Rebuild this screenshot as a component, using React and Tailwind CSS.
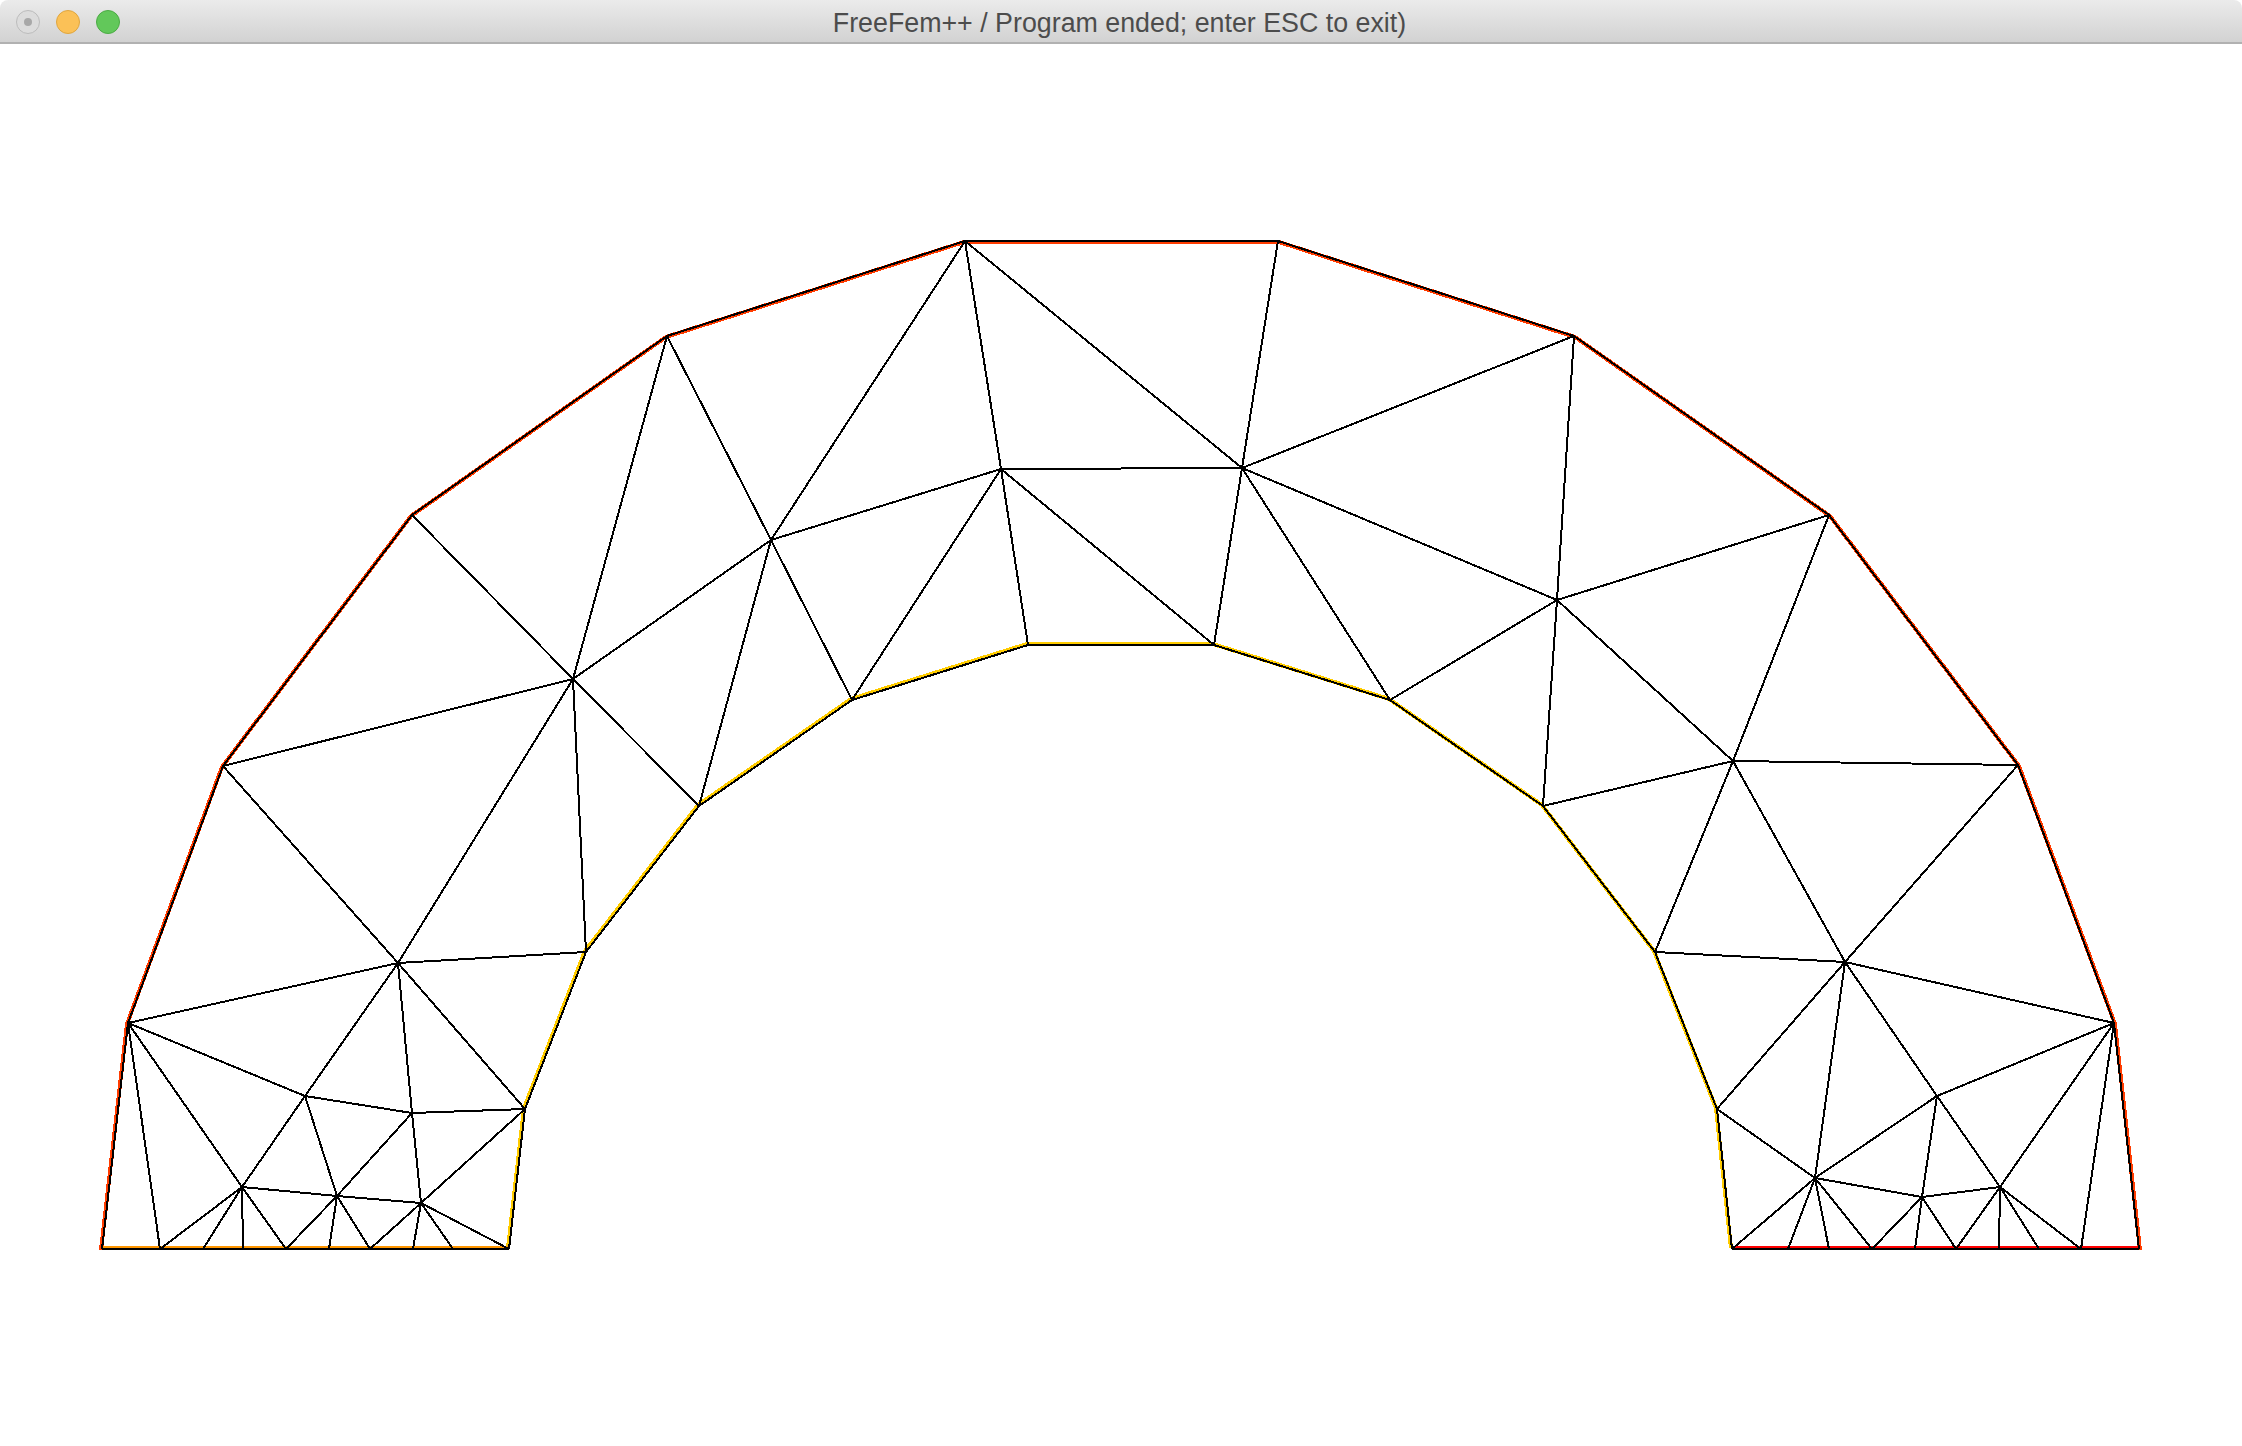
const outerLeft = "102,1249 128,1023 223,766 412,515 667,336 965,241 1278,241";
const outerRight = "1278,241 1574,336 1829,515 2018,765 2114,1023 2139,1249";
const inner = "509,1249 525,1109 586,952 699,806 852,700 1028,645 1214,645 1390,700 1543,806 1655,952 1717,1109 1732,1249";

// triangulation edges, page coordinates: x1 y1 x2 y2
const edges = [
  [965, 241, 1001, 469], [965, 241, 1242, 468], [1278, 241, 1242, 468], [1001, 469, 1242, 468],
  [1001, 469, 1028, 645], [1001, 469, 1214, 645], [1242, 468, 1214, 645], [1242, 468, 1390, 700],
  [1242, 468, 1574, 336], [1242, 468, 1557, 600], [1574, 336, 1557, 600], [1829, 515, 1557, 600],
  [1557, 600, 1390, 700], [1557, 600, 1543, 806], [1557, 600, 1733, 761], [1829, 515, 1733, 761],
  [1733, 761, 2018, 765], [1733, 761, 1543, 806], [1733, 761, 1655, 952], [1733, 761, 1845, 962],
  [2018, 765, 1845, 962], [1845, 962, 2114, 1023], [1845, 962, 1655, 952], [1845, 962, 1717, 1109],
  [1845, 962, 1815, 1178], [1845, 962, 1937, 1096], [1717, 1109, 1815, 1178], [1815, 1178, 1937, 1096],
  [1937, 1096, 2114, 1023], [1937, 1096, 1922, 1197], [1937, 1096, 2000, 1187], [2114, 1023, 2000, 1187],
  [2114, 1023, 2081, 1249], [1815, 1178, 1922, 1197], [1922, 1197, 2000, 1187],
  [1815, 1178, 1732, 1249], [1815, 1178, 1788, 1249], [1815, 1178, 1829, 1249], [1815, 1178, 1872, 1249],
  [1922, 1197, 1872, 1249], [1922, 1197, 1915, 1249], [1922, 1197, 1956, 1249],
  [2000, 1187, 1956, 1249], [2000, 1187, 1999, 1249], [2000, 1187, 2039, 1249], [2000, 1187, 2081, 1249],

  [965, 241, 771, 540], [667, 336, 771, 540], [667, 336, 573, 679], [771, 540, 1001, 469],
  [771, 540, 573, 679], [771, 540, 852, 700], [771, 540, 699, 806], [1001, 469, 852, 700],
  [412, 515, 573, 679], [223, 766, 573, 679], [573, 679, 699, 806], [573, 679, 586, 952],
  [573, 679, 398, 963], [223, 766, 398, 963], [398, 963, 586, 952], [398, 963, 128, 1023],
  [398, 963, 525, 1109], [398, 963, 305, 1096], [398, 963, 412, 1113], [128, 1023, 305, 1096],
  [305, 1096, 412, 1113], [412, 1113, 525, 1109], [305, 1096, 242, 1187], [305, 1096, 337, 1196],
  [412, 1113, 337, 1196], [412, 1113, 421, 1203], [525, 1109, 421, 1203], [128, 1023, 242, 1187],
  [128, 1023, 160, 1249], [242, 1187, 337, 1196], [337, 1196, 421, 1203],
  [242, 1187, 160, 1249], [242, 1187, 203, 1249], [242, 1187, 243, 1249], [242, 1187, 286, 1249],
  [337, 1196, 286, 1249], [337, 1196, 329, 1249], [337, 1196, 370, 1249],
  [421, 1203, 370, 1249], [421, 1203, 413, 1249], [421, 1203, 453, 1249], [421, 1203, 509, 1249],
];

function TitleBar() {
  return (
    <div className="relative flex items-center justify-center h-[44px] shrink-0 bg-gradient-to-b from-[#ebebeb] to-[#d2d2d2] border-b-2 border-[#b1b1b1] rounded-t-[8px]">
      <div className="absolute left-[16px] top-[10px] flex gap-[16px]">
        <div className="flex items-center justify-center w-[24px] h-[24px] rounded-full border border-[#bcbcbc] bg-[#dcdcdc]">
          <div className="w-[8px] h-[8px] rounded-full bg-[#a8a8a8]" />
        </div>
        <div className="w-[24px] h-[24px] rounded-full border border-[#e0a63e] bg-[#fbc157]" />
        <div className="w-[24px] h-[24px] rounded-full border border-[#4bab44] bg-[#62c85a]" />
      </div>
      <span className="ml-[-3px] mt-[5px] text-[26.8px] leading-none text-[#4c4c4c] font-['Liberation_Sans',sans-serif]">
        FreeFem++ / Program ended; enter ESC to exit)
      </span>
    </div>
  );
}

export default function App() {
  return (
    <div className="flex flex-col w-[2242px] h-[1446px] bg-white overflow-hidden">
      <TitleBar />
      <div className="flex-1">
        <svg viewBox="0 44 2242 1402" width="2242" height="1402" className="block" shapeRendering="crispEdges" fill="none" strokeWidth="2">
          {/* boundary labels: wide coloured stroke under the black one */}
          <g strokeWidth="4">
            <polyline points={outerLeft} stroke="#ff3c00" transform="translate(-1 1)" />
            <polyline points={outerRight} stroke="#ff3c00" transform="translate(1 1)" />
            <polyline points={inner} stroke="#ffcc00" transform="translate(-1 -1)" />
            <line x1="102" y1="1248" x2="509" y2="1248" stroke="#ff9600" />
            <line x1="1732" y1="1248" x2="2139" y2="1248" stroke="#ff0000" />
          </g>
          <g stroke="#000000">
            {edges.map(([x1, y1, x2, y2], i) => (
              <line key={i} x1={x1} y1={y1} x2={x2} y2={y2} />
            ))}
            <polyline points={outerLeft} />
            <polyline points={outerRight} />
            <polyline points={inner} />
            <line x1="102" y1="1249" x2="509" y2="1249" />
            <line x1="1732" y1="1249" x2="2139" y2="1249" />
          </g>
        </svg>
      </div>
    </div>
  );
}
